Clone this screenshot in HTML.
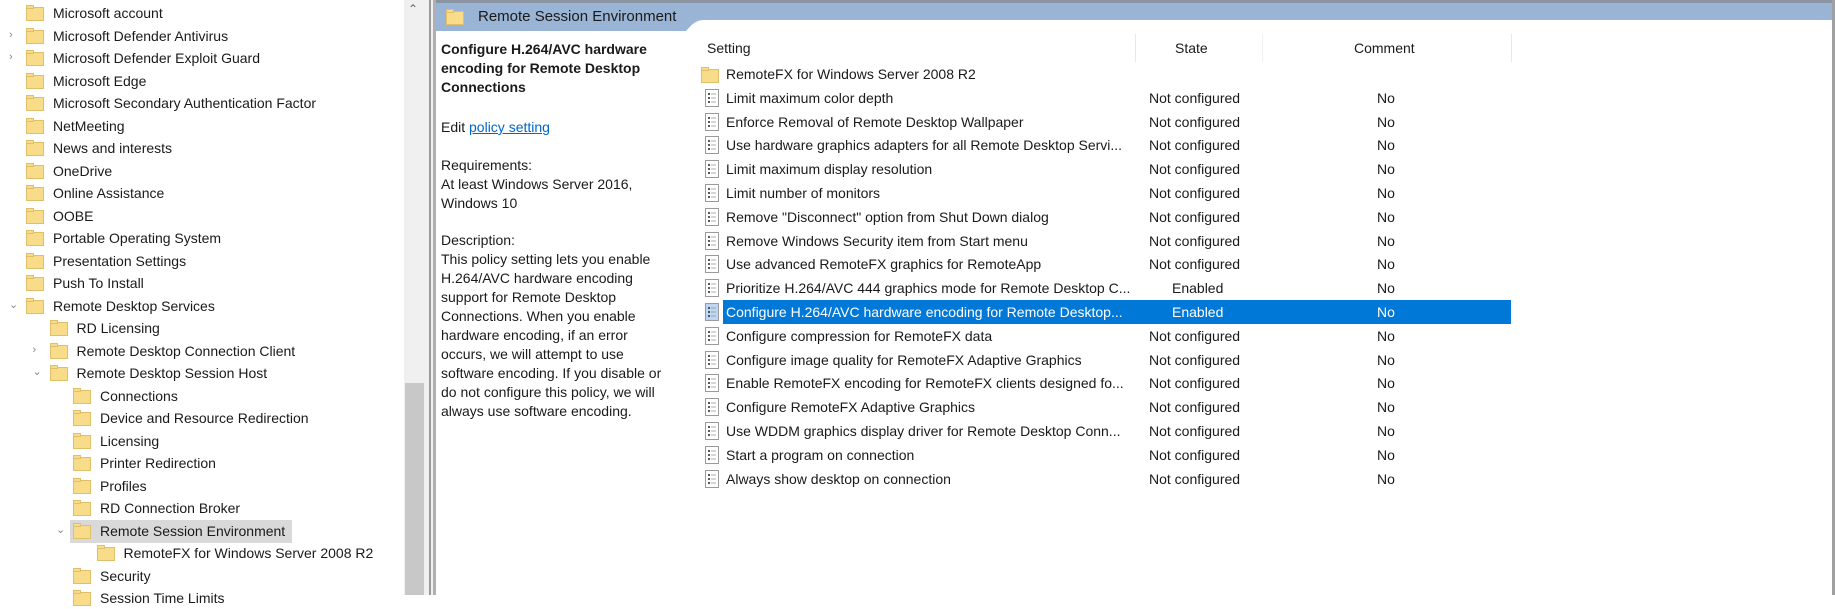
<!DOCTYPE html>
<html><head><meta charset="utf-8">
<style>
*{margin:0;padding:0;box-sizing:border-box}
body{width:1835px;height:595px;overflow:hidden;background:#fff;font-family:"Liberation Sans",sans-serif;font-size:14px;color:#1a1a1a;position:relative}
.abs{position:absolute;white-space:nowrap}
.tr{position:absolute;height:22px;line-height:22px;white-space:nowrap}
.fold{position:absolute;width:18px;height:16px}
.chev{position:absolute;font-size:11px;color:#888}
.row{position:absolute;left:700px;width:811px;height:24px;line-height:24px;white-space:nowrap}
.row .n{position:absolute;left:26px}
.row .s{position:absolute;left:449px}
.row .c{position:absolute;left:677px}
.sel{background:#0078d7;color:#fff}
</style></head><body>

<div class="abs" style="left:404px;top:0;width:21px;height:595px;background:#f0f0f0"></div>
<div class="abs" style="left:405px;top:383px;width:19px;height:212px;background:#c8c8c8"></div>
<div class="abs" style="left:408px;top:2px;font-size:12px;color:#666">&#8963;</div>
<div class="abs" style="left:425px;top:0;width:8px;height:595px;background:#f0f0f0"></div>
<div class="abs" style="left:429px;top:0;width:2px;height:595px;background:#9a9a9a"></div>
<div class="abs" style="left:433px;top:0;width:3px;height:595px;background:#b0b0b0"></div>
<div class="abs" style="left:1832px;top:0;width:3px;height:595px;background:#a0a0a0"></div>

<div class="abs" style="left:436px;top:0;width:1396px;height:3px;background:#8a94a3"></div>
<div class="abs" style="left:436px;top:3px;width:1396px;height:29px;background:#99b4d4"></div>
<svg class="abs" style="left:680px;top:18px" width="1152" height="16"><path d="M0 16 C8 16 10 2 24 2 L1152 2 L1152 16 Z" fill="#fff"/></svg>
<div class="abs" style="left:436px;top:31px;width:1396px;height:564px;background:#fff"></div>
<svg class="abs" style="left:446px;top:9px" width="18" height="16"><rect x="0.5" y="2.5" width="17" height="13" fill="#f8dc8a" stroke="#e0bf6a"/><rect x="0.5" y="0.5" width="7" height="3" fill="#f8dc8a" stroke="#e0bf6a"/></svg>
<div class="abs" style="left:478px;top:8px;font-size:15px;color:#1a1a1a">Remote Session Environment</div>

<div class="abs" style="left:441px;top:40px;font-weight:bold;line-height:19px;font-size:14px">Configure H.264/AVC hardware<br>encoding for Remote Desktop<br>Connections</div>
<div class="abs" style="left:441px;top:118px;line-height:19px">Edit <span style="color:#0066cc;text-decoration:underline">policy setting </span></div>
<div class="abs" style="left:441px;top:156px;line-height:19px">Requirements:<br>At least Windows Server 2016,<br>Windows 10</div>
<div class="abs" style="left:441px;top:231px;line-height:19px">Description:<br>This policy setting lets you enable<br>H.264/AVC hardware encoding<br>support for Remote Desktop<br>Connections. When you enable<br>hardware encoding, if an error<br>occurs, we will attempt to use<br>software encoding. If you disable or<br>do not configure this policy, we will<br>always use software encoding.</div>

<div class="abs" style="left:707px;top:40px">Setting</div>
<div class="abs" style="left:1175px;top:40px">State</div>
<div class="abs" style="left:1354px;top:40px">Comment</div>
<div class="abs" style="left:1135px;top:34px;width:1px;height:28px;background:#e8e8e8"></div>
<div class="abs" style="left:1262px;top:34px;width:1px;height:28px;background:#f0f0f0"></div>
<div class="abs" style="left:1511px;top:34px;width:1px;height:28px;background:#e8e8e8"></div>

<div id="list"></div>
<div id="tree"></div>

<script>
var fold='<svg width="18" height="16"><rect x="0.5" y="2.5" width="17" height="13" fill="#f8dc8a" stroke="#e0bf6a"/><rect x="0.5" y="0.5" width="7" height="3" fill="#f8dc8a" stroke="#e0bf6a"/></svg>';
function pol(sel){var bg=sel?'#bcd6f3':'#fff';return '<svg width="15" height="18"><rect x="0.5" y="0.5" width="13" height="17" fill="'+bg+'" stroke="#9a9a9a"/><rect x="3" y="4" width="2" height="2" fill="#555"/><rect x="3" y="8" width="2" height="2" fill="#555"/><rect x="3" y="12" width="2" height="2" fill="#555"/><line x1="6" y1="5" x2="11" y2="5" stroke="#999" stroke-width="0.8"/><line x1="6" y1="9" x2="11" y2="9" stroke="#999" stroke-width="0.8"/><line x1="6" y1="13" x2="11" y2="13" stroke="#999" stroke-width="0.8"/></svg>';}
var rows=[
["RemoteFX for Windows Server 2008 R2","","",0,1],
["Limit maximum color depth","Not configured","No"],
["Enforce Removal of Remote Desktop Wallpaper","Not configured","No"],
["Use hardware graphics adapters for all Remote Desktop Servi...","Not configured","No"],
["Limit maximum display resolution","Not configured","No"],
["Limit number of monitors","Not configured","No"],
["Remove \"Disconnect\" option from Shut Down dialog","Not configured","No"],
["Remove Windows Security item from Start menu","Not configured","No"],
["Use advanced RemoteFX graphics for RemoteApp","Not configured","No"],
["Prioritize H.264/AVC 444 graphics mode for Remote Desktop C...","Enabled","No"],
["Configure H.264/AVC hardware encoding for Remote Desktop...","Enabled","No",1],
["Configure compression for RemoteFX data","Not configured","No"],
["Configure image quality for RemoteFX Adaptive Graphics","Not configured","No"],
["Enable RemoteFX encoding for RemoteFX clients designed fo...","Not configured","No"],
["Configure RemoteFX Adaptive Graphics","Not configured","No"],
["Use WDDM graphics display driver for Remote Desktop Conn...","Not configured","No"],
["Start a program on connection","Not configured","No"],
["Always show desktop on connection","Not configured","No"]];
var h='';
rows.forEach(function(r,i){var y=62+i*23.8;var sl=r[1]=="Enabled"?472:449;
h+='<div class="row" style="top:'+y+'px"><span style="position:absolute;left:'+(r[4]?1:5)+'px;top:'+(r[4]?4:3)+'px">'+(r[4]?fold:pol(r[3]))+'</span>'+
'<div style="position:absolute;left:23px;right:0;top:0;bottom:0" class="'+(r[3]?'sel':'')+'"><span class="n" style="left:3px">'+r[0]+'</span><span class="s" style="left:'+(sl-23)+'px">'+r[1]+'</span><span class="c" style="left:654px">'+r[2]+'</span></div></div>';});
document.getElementById('list').innerHTML=h;
var t=[["Microsoft account",0,""],["Microsoft Defender Antivirus",0,">"],["Microsoft Defender Exploit Guard",0,">"],["Microsoft Edge",0,""],["Microsoft Secondary Authentication Factor",0,""],["NetMeeting",0,""],["News and interests",0,""],["OneDrive",0,""],["Online Assistance",0,""],["OOBE",0,""],["Portable Operating System",0,""],["Presentation Settings",0,""],["Push To Install",0,""],["Remote Desktop Services",0,"v"],["RD Licensing",1,""],["Remote Desktop Connection Client",1,">"],["Remote Desktop Session Host",1,"v"],["Connections",2,""],["Device and Resource Redirection",2,""],["Licensing",2,""],["Printer Redirection",2,""],["Profiles",2,""],["RD Connection Broker",2,""],["Remote Session Environment",2,"v",1],["RemoteFX for Windows Server 2008 R2",3,""],["Security",2,""],["Session Time Limits",2,""]];
var g='';
t.forEach(function(r,i){var y=2+i*22.5;var x=26+r[1]*23.5;
if(r[3])g+='<div class="abs" style="left:'+(x-3)+'px;top:'+(y)+'px;width:222px;height:23px;background:#d9d9d9"></div>';
if(r[2])g+='<div class="chev" style="left:'+(x-17)+'px;top:'+(y+(r[2]=="v"?3:4))+'px">'+(r[2]=="v"?"&#8964;":"&#8250;")+'</div>';
g+='<div class="fold" style="left:'+x+'px;top:'+(y+3)+'px">'+fold+'</div><div class="tr" style="left:'+(x+27)+'px;top:'+y+'px">'+r[0]+'</div>';});
document.getElementById('tree').innerHTML=g;
</script>
</body></html>
